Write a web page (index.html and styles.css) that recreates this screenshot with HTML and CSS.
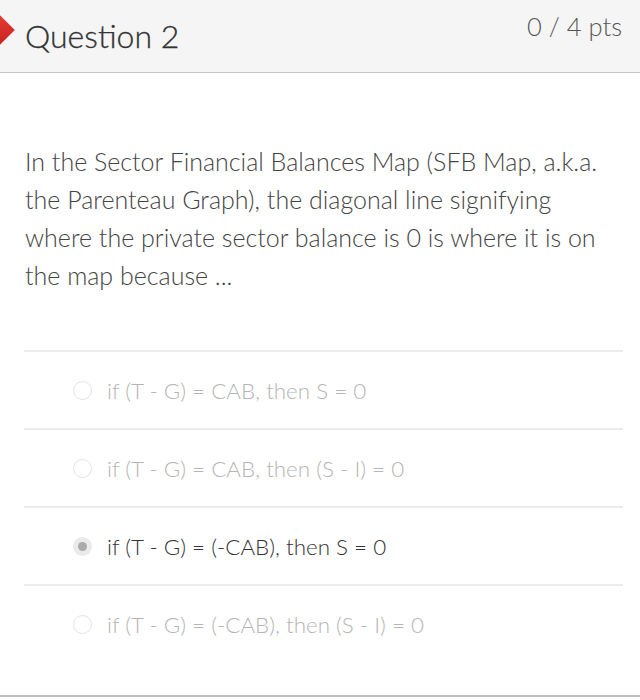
FILE: index.html
```html
<!DOCTYPE html>
<html>
<head>
<meta charset="utf-8">
<link rel="stylesheet" href="styles.css">
</head>
<body>
<div class="quiz">
  <div class="header">
    <span class="marker"></span>
    <h2 class="title">Question 2</h2>
    <div class="pts">0 / 4 pts</div>
  </div>
  <div class="body">
    <p class="question">In the Sector Financial Balances Map (SFB Map, a.k.a. the Parenteau Graph), the diagonal line signifying where the private sector balance is 0 is where it is on the map because ...</p>
    <div class="answers">
      <div class="answer"><span class="radio"></span><span class="label">if (T - G) = CAB, then S = 0</span></div>
      <div class="answer"><span class="radio"></span><span class="label">if (T - G) = CAB, then (S - I) = 0</span></div>
      <div class="answer selected"><span class="radio"></span><span class="label">if (T - G) = (-CAB), then S = 0</span></div>
      <div class="answer"><span class="radio"></span><span class="label">if (T - G) = (-CAB), then (S - I) = 0</span></div>
    </div>
  </div>
</div>
</body>
</html>
```
FILE: styles.css
```css
* { box-sizing: border-box; }
html, body { margin: 0; padding: 0; background: #fff; }
body { font-family: Lato, "Open Sans", sans-serif; width: 640px; height: 700px; overflow: hidden; }
.quiz { height: 697px; border-bottom: 2px solid #bdbdbd; }
.header {
  position: relative;
  height: 73px;
  background: #f5f5f5;
  border-bottom: 1px solid #c4c4c4;
  display: flex;
  justify-content: space-between;
  padding: 0 18px 0 25px;
  overflow: hidden;
}
.marker {
  position: absolute;
  left: -19px; top: 16px;
  width: 28px; height: 28px;
  background: linear-gradient(135deg, #e8403a, #c41f1c);
  transform: rotate(45deg);
}
.title { margin: 0; padding-top: 15px; font-size: 32px; font-weight: 300; line-height: 42px; color: #333; -webkit-text-stroke: 0.3px #333; }
.pts { padding-top: 10px; font-size: 25.5px; font-weight: 300; color: #555; line-height: 32px; }
.body { padding: 69px 17px 0 25px; }
.question { margin: 0; font-size: 25px; line-height: 38px; color: #444; font-weight: 300; }
.answers { margin-top: 56px; margin-left: -1px; }
.answer {
  height: 78px;
  border-top: 2px solid #ececec;
  display: flex;
  align-items: center;
  padding-left: 49px;
  color: #b5b5b5;
  font-size: 22.4px;
  font-weight: 300;
}
.radio {
  width: 19px; height: 19px;
  border-radius: 50%;
  border: 1.5px solid #e4e4e4;
  background: #fff;
  margin-right: 15px;
  flex: none;
  display: flex; align-items: center; justify-content: center;
}
.selected { color: #333; }
.selected .radio { border: none; background: #eaeaea; }
.selected .radio::after { content: ""; width: 9px; height: 9px; border-radius: 50%; background: #aaa; }
```
